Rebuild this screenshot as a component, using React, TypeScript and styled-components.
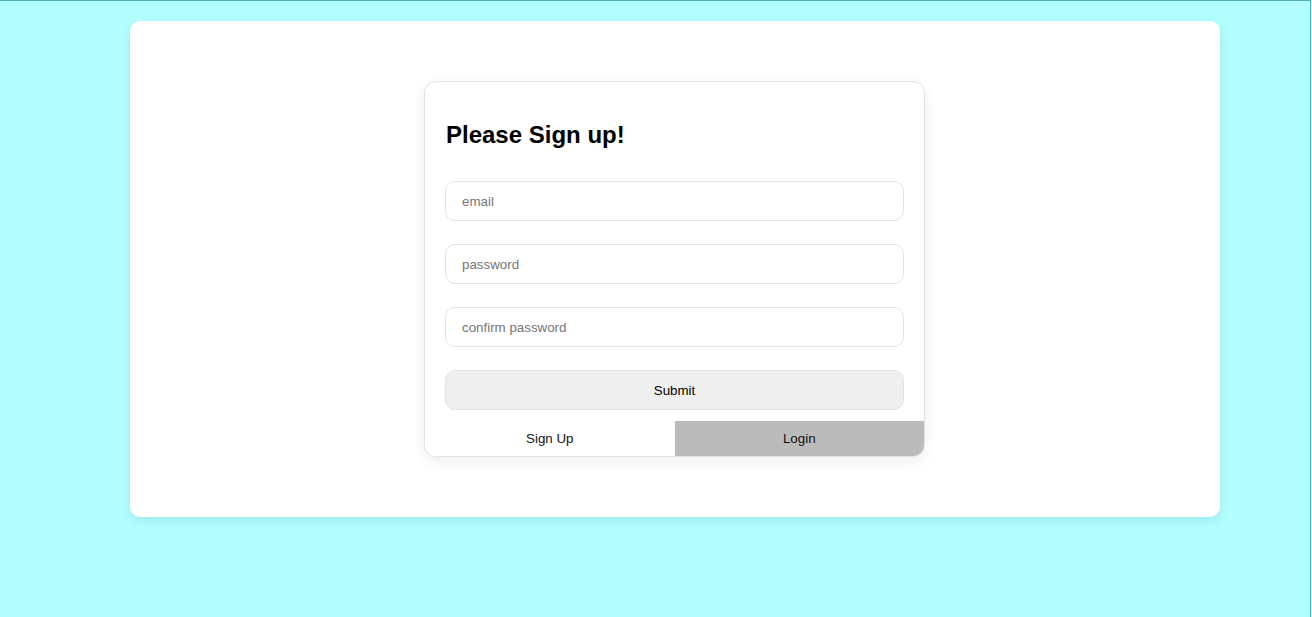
import React from "react";
import styled, { createGlobalStyle } from "styled-components";

const Global = createGlobalStyle`
  html, body {
    margin: 0;
    padding: 0;
    background: #b3ffff;
    font-family: "Liberation Sans", Arial, sans-serif;
  }
  * { box-sizing: border-box; }
`;

const Page = styled.div`
  width: 1311px;
  min-height: 617px;
  border-top: 1px solid #55b0b0;
  border-right: 1px solid #55b0b0;
  padding: 20px 0 0 130px;
  background: #b3ffff;
`;

const Panel = styled.div`
  width: 1090px;
  height: 496px;
  background: #ffffff;
  border-radius: 10px;
  box-shadow: 0 4px 12px rgba(0, 80, 80, 0.12);
  padding: 60px 1px 0 0;
  display: flex;
  justify-content: center;
  align-items: flex-start;
`;

const Card = styled.div`
  width: 501px;
  background: #ffffff;
  border: 1px solid #e3e3e3;
  border-radius: 12px;
  box-shadow: 0 4px 14px rgba(0, 0, 0, 0.07);
  overflow: hidden;
  display: flex;
  flex-direction: column;
`;

const Form = styled.form`
  display: flex;
  flex-direction: column;
  gap: 23px;
  padding: 20px 20px 11px;
`;

const Title = styled.h2`
  margin: 19px 0 9px 1px;
  font-size: 24px;
  line-height: 28px;
  font-weight: 700;
  color: #000;
`;

const Input = styled.input`
  height: 40px;
  width: 100%;
  border: 1px solid #e2e2e2;
  border-radius: 10px;
  padding: 0 16px;
  font-family: "Liberation Sans", Arial, sans-serif;
  font-size: 13.333px;
  color: #000;
  background: #fff;
  outline: none;
  &::placeholder {
    color: #757575;
  }
`;

const Submit = styled.button`
  height: 40px;
  width: 100%;
  border: 1px solid #e3e3e3;
  border-radius: 10px;
  background: #efefef;
  font-family: "Liberation Sans", Arial, sans-serif;
  font-size: 13.333px;
  color: #000;
  cursor: pointer;
`;

const Tabs = styled.div`
  display: flex;
  height: 35px;
`;

const Tab = styled.button<{ $active?: boolean }>`
  flex: 1;
  border: none;
  margin: 0;
  background: ${(p) => (p.$active ? "#ffffff" : "#bbbbbb")};
  font-family: "Liberation Sans", Arial, sans-serif;
  font-size: 13.333px;
  color: #111;
  cursor: pointer;
`;

export default function App() {
  return (
    <>
      <Global />
      <Page>
        <Panel>
          <Card>
            <Form onSubmit={(e) => e.preventDefault()}>
              <Title>Please Sign up!</Title>
              <Input type="email" placeholder="email" />
              <Input type="password" placeholder="password" />
              <Input type="password" placeholder="confirm password" />
              <Submit type="submit">Submit</Submit>
            </Form>
            <Tabs>
              <Tab $active>Sign Up</Tab>
              <Tab>Login</Tab>
            </Tabs>
          </Card>
        </Panel>
      </Page>
    </>
  );
}
